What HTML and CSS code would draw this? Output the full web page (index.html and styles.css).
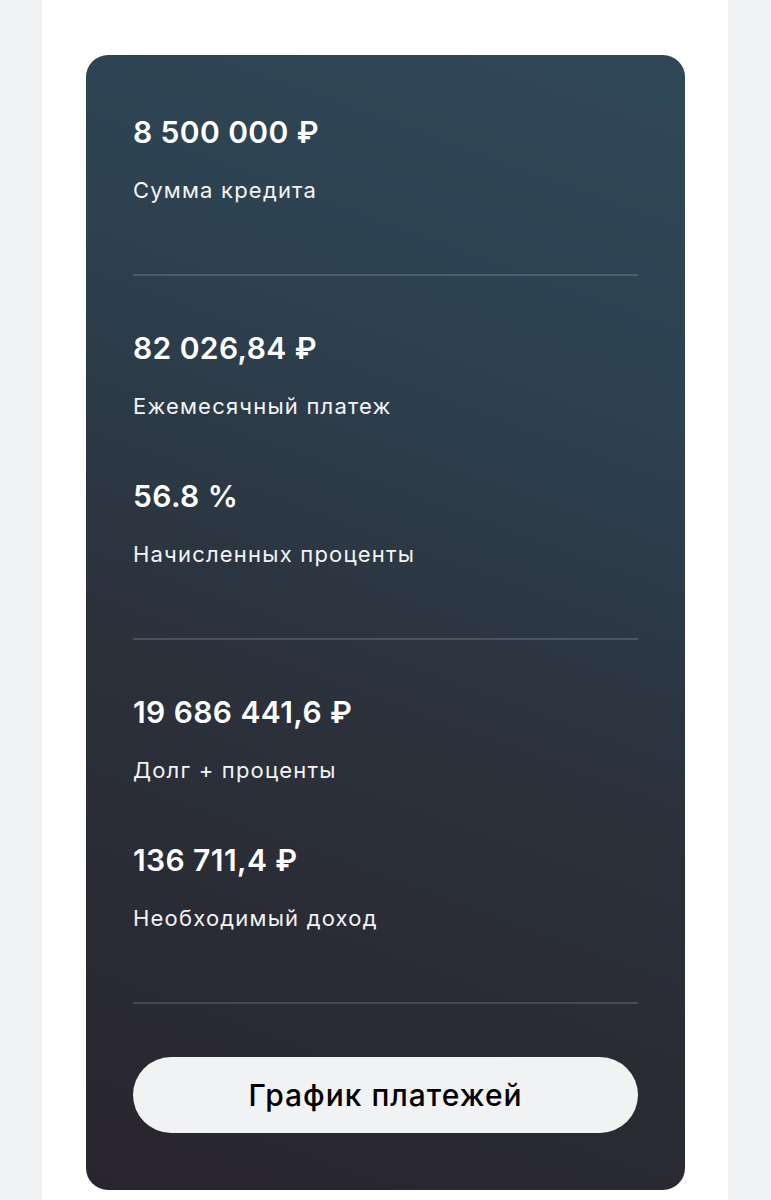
FILE: index.html
```html
<!DOCTYPE html>
<html lang="ru">
<head>
<meta charset="utf-8">
<title>Кредит</title>
<link rel="stylesheet" href="styles.css">
</head>
<body>
<div class="page">
  <div class="card">
    <section class="section">
      <div class="item">
        <div class="value">8 500 000 ₽</div>
        <div class="label">Сумма кредита</div>
      </div>
    </section>
    <hr class="divider">
    <section class="section">
      <div class="item">
        <div class="value">82 026,84 ₽</div>
        <div class="label">Ежемесячный платеж</div>
      </div>
      <div class="item">
        <div class="value">56.8 %</div>
        <div class="label">Начисленных проценты</div>
      </div>
    </section>
    <hr class="divider">
    <section class="section">
      <div class="item">
        <div class="value">19 686 441,6 ₽</div>
        <div class="label">Долг + проценты</div>
      </div>
      <div class="item">
        <div class="value">136 711,4 ₽</div>
        <div class="label">Необходимый доход</div>
      </div>
    </section>
    <hr class="divider last">
    <button class="schedule-btn" type="button">График платежей</button>
  </div>
</div>
</body>
</html>
```
FILE: styles.css
```css
* { box-sizing: border-box; }
html, body { margin: 0; padding: 0; }
body {
  background: #f0f2f4;
  font-family: "Inter", "Noto Sans", sans-serif;
  min-height: 1200px;
}
.page {
  margin-left: 42px;
  width: 686px;
  min-height: 1200px;
  background: #ffffff;
  padding-top: 55px;
}
.card {
  margin-left: 44px;
  width: 599px;
  border-radius: 22px;
  background: linear-gradient(200deg, #2f4858 0%, #2d4150 28%, #2b313b 58%, #29252c 100%);
  padding: 59px 47px 57px;
  color: #ffffff;
}
.section {
  display: flex;
  flex-direction: column;
  gap: 58px;
}
.item {
  display: flex;
  flex-direction: column;
  gap: 26px;
}
.value {
  font-size: 30px;
  line-height: 36px;
  font-weight: 600;
  letter-spacing: 0.4px;
}
.label {
  font-size: 22px;
  line-height: 28px;
  font-weight: 400;
  letter-spacing: 1.2px;
  color: #f3f4f6;
}
.divider {
  border: 0;
  height: 2px;
  background: rgba(255, 255, 255, 0.15);
  margin: 70px 0 54px;
}
.divider.last {
  margin-bottom: 53px;
}
.schedule-btn {
  display: block;
  width: 100%;
  height: 76px;
  border: 0;
  border-radius: 38px;
  background: #f0f2f4;
  color: #000000;
  font-family: "Inter", "Noto Sans", sans-serif;
  font-size: 30px;
  font-weight: 500;
  letter-spacing: 1px;
  cursor: pointer;
}
```
